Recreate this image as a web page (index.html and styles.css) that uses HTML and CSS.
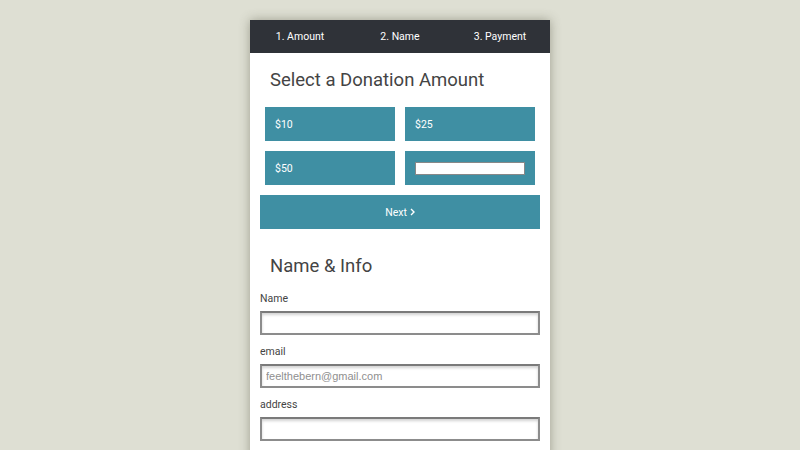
FILE: index.html
```html
<!DOCTYPE html>
<html lang="en">
<head>
  <meta charset="UTF-8" />
  <meta name="viewport" content="width=device-width, initial-scale=1.0"/>
  <title>Donate</title>
  <link rel="stylesheet" href="styles.css">
</head>
<body>
  <div class="card">
    <nav class="steps">
      <span>1. Amount</span>
      <span>2. Name</span>
      <span>3. Payment</span>
    </nav>

    <section class="step">
      <h2>Select a Donation Amount</h2>
      <div class="amounts">
        <button class="amount">$10</button>
        <button class="amount">$25</button>
        <button class="amount">$50</button>
        <div class="amount custom"><input type="text" /></div>
      </div>
      <button class="next">Next
        <svg class="chevron" width="5" height="8" viewBox="0 0 5 8"><path d="M1 1 L4 4 L1 7" fill="none" stroke="#fff" stroke-width="1.4"/></svg>
      </button>
    </section>

    <section class="step info">
      <h2>Name &amp; Info</h2>
      <form>
        <div class="form-group">
          <label for="name">Name</label>
          <input type="text" id="name" />
        </div>
        <div class="form-group">
          <label for="email">email</label>
          <input type="email" id="email" placeholder="feelthebern@gmail.com" />
        </div>
        <div class="form-group">
          <label for="address">address</label>
          <input type="text" id="address" />
        </div>
      </form>
    </section>
  </div>
</body>
</html>
```

FILE: styles.css
```css
:root {
  --page-bg: #dedfd3;
  --nav-bg: #2f3238;
  --teal: #3f8fa3;
  --text-color: #444;
  --white: #ffffff;
}

* {
  box-sizing: border-box;
  margin: 0;
  padding: 0;
}

body {
  font-family: Roboto, 'Liberation Sans', sans-serif;
  background-color: var(--page-bg);
  color: var(--text-color);
  padding-top: 20px;
}

.card {
  width: 300px;
  margin: 0 auto;
  background-color: var(--white);
  min-height: 440px;
  box-shadow: 0 0 10px rgba(80, 80, 60, 0.45);
}

.steps {
  display: grid;
  grid-template-columns: repeat(3, 1fr);
  height: 33px;
  align-items: center;
  background-color: var(--nav-bg);
  color: var(--white);
  font-size: 10.5px;
  text-align: center;
}

.step {
  padding: 15px 10px 0;
}

h2 {
  font-weight: 400;
  font-size: 18.5px;
  line-height: 24px;
  color: var(--text-color);
  margin-left: 10px;
  margin-bottom: 15px;
}

.amounts {
  display: grid;
  grid-template-columns: 130px 130px;
  gap: 10px;
  padding: 0 5px;
}

.amount {
  height: 34px;
  border: none;
  background-color: var(--teal);
  color: var(--white);
  font-family: inherit;
  font-size: 10.5px;
  text-align: left;
  padding: 0 10px;
}

.amount.custom {
  display: flex;
  align-items: center;
}

.amount.custom input {
  width: 110px;
  height: 13px;
  border: 1px solid #888;
  background-color: var(--white);
}

.next {
  display: flex;
  align-items: center;
  justify-content: center;
  gap: 3px;
  width: 100%;
  height: 34px;
  margin-top: 10px;
  border: none;
  background-color: var(--teal);
  color: var(--white);
  font-family: inherit;
  font-size: 10.5px;
}

.info {
  padding-top: 25px;
}

.info h2 {
  margin-bottom: 14px;
}

form {
  display: flex;
  flex-direction: column;
  gap: 10px;
}

.form-group {
  display: flex;
  flex-direction: column;
  gap: 6px;
}

.form-group label {
  font-size: 10.5px;
  line-height: 13px;
}

.form-group input {
  height: 24px;
  border: 2px solid #8c8c8c;
  border-top-color: #7a7a7a;
  box-shadow: inset 0 2px 3px rgba(0, 0, 0, 0.18);
  padding: 0 4px;
  font-family: 'Liberation Sans', Arial, sans-serif;
  font-size: 11px;
}

.form-group input::placeholder {
  color: #8f8f8f;
}
```
